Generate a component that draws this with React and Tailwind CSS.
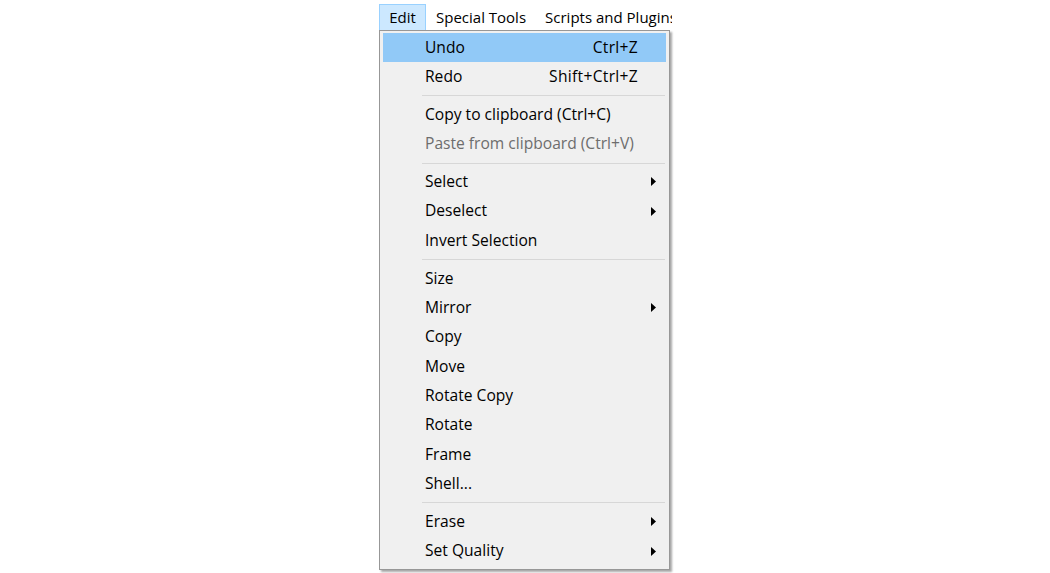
const items = [
  { label: "Undo", shortcut: "Ctrl+Z", active: true },
  { label: "Redo", shortcut: "Shift+Ctrl+Z" },
  { sep: true },
  { label: "Copy to clipboard (Ctrl+C)" },
  { label: "Paste from clipboard (Ctrl+V)", disabled: true },
  { sep: true },
  { label: "Select", sub: true },
  { label: "Deselect", sub: true },
  { label: "Invert Selection" },
  { sep: true },
  { label: "Size" },
  { label: "Mirror", sub: true },
  { label: "Copy" },
  { label: "Move" },
  { label: "Rotate Copy" },
  { label: "Rotate" },
  { label: "Frame" },
  { label: "Shell..." },
  { sep: true },
  { label: "Erase", sub: true },
  { label: "Set Quality", sub: true },
];

function Arrow() {
  return (
    <svg width="5" height="9" viewBox="0 0 5 9" className="block">
      <path d="M0 0 L5 4.5 L0 9 Z" fill="#000" />
    </svg>
  );
}

function MenuRow({ item }) {
  if (item.sep) {
    return (
      <div className="flex h-[8.3px] items-center pl-[39px] pr-[1px]">
        <div className="h-px w-full bg-[#d7d7d7]" />
      </div>
    );
  }
  return (
    <div
      className={`flex h-[29.4px] items-center pl-[42px] pr-[10px] ${
        item.active ? "bg-[#91c9f7]" : ""
      } ${item.disabled ? "text-[#6d6d6d]" : "text-black"}`}
    >
      <span className="flex-1">{item.label}</span>
      {item.shortcut && <span className="mr-[18px] tracking-[0.3px]">{item.shortcut}</span>}
      {item.sub && <Arrow />}
    </div>
  );
}

export default function App() {
  return (
    <div
      className="h-[573px] w-[1050px] overflow-hidden bg-white text-[15px] font-medium leading-none"
      style={{ fontFamily: '"Open Sans", "Noto Sans", sans-serif' }}
    >
      <div className="ml-[379px] w-[293px]">
        <div className="flex h-[30px] items-end overflow-hidden whitespace-nowrap">
          <div className="flex h-[26px] w-[47px] shrink-0 items-center justify-center border border-b-0 border-[#99d1ff] bg-[#cce8ff]">
            Edit
          </div>
          <div className="flex h-[26px] shrink-0 items-center pl-[10px] pr-[19px]">Special Tools</div>
          <div className="flex h-[26px] shrink-0 items-center">Scripts and Plugins</div>
        </div>
        <div className="w-[291px] border border-[#979797] bg-[#f0f0f0] px-[3px] pb-[3px] pt-[2px] text-[15.6px] shadow-[2px_2px_2px_rgba(0,0,0,0.35)]">
          {items.map((item, i) => (
            <MenuRow key={i} item={item} />
          ))}
        </div>
      </div>
    </div>
  );
}
